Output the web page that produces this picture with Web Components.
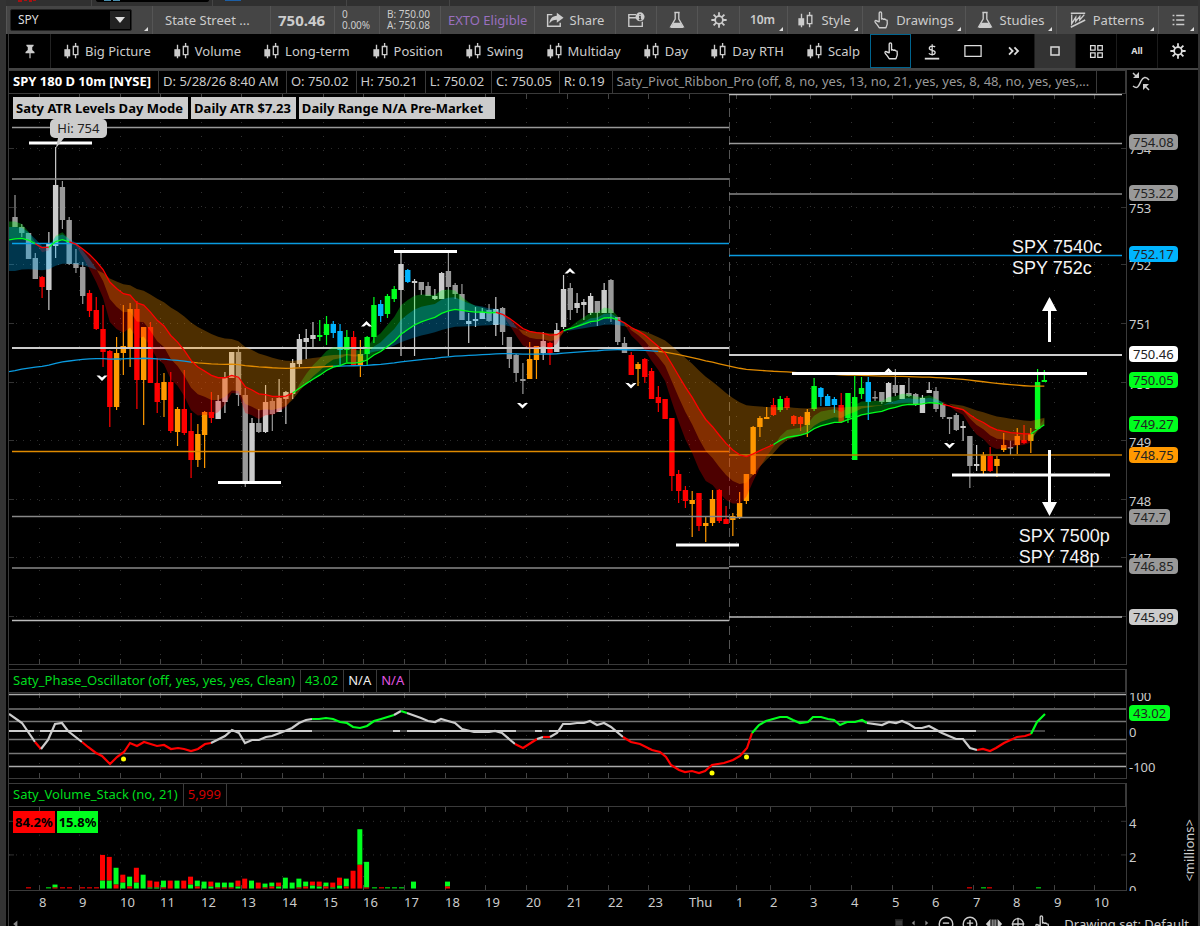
<!DOCTYPE html>
<html lang="en">
<head>
<meta charset="utf-8">
<title>SPY 180 D 10m</title>
<style>
  html, body { margin: 0; height: 100%; }
  body {
    background: #000;
    color: #ccc;
    font: 13px/18px "Noto Sans", "Open Sans", sans-serif;
    overflow: hidden;
  }
</style>
</head>
<body>
<trading-desk></trading-desk>

<script>
const ICONS = {
  candles: '<path d="M5 3v15M14 1v4M14 14v4" stroke="currentColor" stroke-width="1.5"/><path d="M1.500 8h6.500v8H1.500z" fill="currentColor"/><path d="M11.500 5h5v9h-5z" fill="none" stroke="currentColor" stroke-width="1.500"/>',
  pin: '<path d="M6 3h8v1.500l-1.500 1V9l2.500 2v1.500H5V11l2.500-2V5.500L6 4.500z" fill="currentColor"/><path d="M10 12v6" stroke="currentColor" stroke-width="1.300"/>',
  share: '<path d="M7 4H1.800v13h14v-4" fill="none" stroke="currentColor" stroke-width="1.600"/><path d="M12 2l7.500 5.500L12 13v-3.300C8.500 9.700 6 10.500 3.800 14 4 9 7 5.300 12 5.200z" fill="currentColor"/>',
  info: '<path d="M10 4H2v13h15v-5M2 7.500h8" fill="none" stroke="currentColor" stroke-width="1.500"/><circle cx="14.500" cy="6.500" r="5" fill="currentColor"/><path d="M14.500 3.300v1.500M13.400 6.200h1.300v3.200M13.200 9.500h2.800" stroke="#444" stroke-width="1.300"/>',
  flask: '<path d="M7 1.700h6M8 2v7L3 17.500h14L12 9V2" fill="none" stroke="currentColor" stroke-width="1.500"/><path d="M6 13h8l3 6H3z" fill="currentColor"/>',
  gear: '<circle cx="10" cy="10" r="4.300" fill="none" stroke="currentColor" stroke-width="2"/><path d="M10 1.500v4M10 14.500v4M1.500 10h4M14.500 10h4M4 4l2.800 2.800M13.200 13.200L16 16M16 4l-2.800 2.800M6.800 13.200L4 16" stroke="currentColor" stroke-width="2"/>',
  hand: '<path d="M8 12V2.200a1.300 1.300 0 0 1 2.600 0V9l1-.6 1.400.9 1.300-.4 1.200 1 1.300.2c.8 3 .3 5-1.300 8.500H8C6.500 16 5 14.500 3.500 12.300c-.8-1.500.8-2.400 2-1.200z" fill="none" stroke="currentColor" stroke-width="1.500" stroke-linejoin="round"/>',
  pattern: '<path d="M2 2.500h16M2 18L18 10" stroke="currentColor" stroke-width="1.700"/><path d="M3 4v10l4.500-7v4.500L12 6v4l5-6" fill="none" stroke="currentColor" stroke-width="1.500"/>',
  list: '<path d="M4 5h2M4 10h2M4 15h2M8 5h9M8 10h9M8 15h9" stroke="currentColor" stroke-width="1.500"/>',
  price: '<path d="M13.500 5.500C12 4 7 4 7 7c0 3.200 6.500 1.500 6.500 4.700 0 3-5.500 2.800-7 1M10.200 2.500v12.500" fill="none" stroke="currentColor" stroke-width="1.400"/><path d="M2 18.500h16" stroke="currentColor" stroke-width="2"/>',
  box: '<path d="M1 4h18v12H1z" fill="none" stroke="currentColor" stroke-width="1.400"/>',
  more: '<path d="M4.500 6l4 4-4 4M10.500 6l4 4-4 4" fill="none" stroke="currentColor" stroke-width="2"/>',
  single: '<path d="M5.500 5.500h9v9h-9z" fill="none" stroke="currentColor" stroke-width="1.600"/>',
  grid: '<path d="M4 4h5v5H4zM12 4h5v5h-5zM4 12h5v5H4zM12 12h5v5h-5z" fill="none" stroke="currentColor" stroke-width="1.400"/>',
  swap: '<path d="M2 15c5 4 6-1 8-5s5-5 8-1" fill="none" stroke="currentColor" stroke-width="1.500"/><path d="M8 1v6H2zM12 19v-6h6z" fill="currentColor"/><path d="M2 2l4 4M18 19l-4-4" stroke="currentColor" stroke-width="1.500"/>',
  minus: '<circle cx="10" cy="10" r="7.500" fill="none" stroke="currentColor" stroke-width="1.600"/><path d="M6.500 9h7" stroke="currentColor" stroke-width="1.600"/>',
  plus: '<circle cx="10" cy="10" r="7.500" fill="none" stroke="currentColor" stroke-width="1.600"/><path d="M6.500 9h7M10 5.500v7" stroke="currentColor" stroke-width="1.600"/>',
  expand: '<path d="M6 4.500v11L1 10zM14 4.500v11l5-5.500z" fill="currentColor"/><path d="M8 5v10M10 5v10M12 5v10" stroke="currentColor"/>',
  target: '<circle cx="10" cy="10" r="6" fill="none" stroke="currentColor" stroke-width="1.400"/><path d="M10 3v14M3 10h14" stroke="currentColor" stroke-width="1.400"/>',
  bars: '<path d="M0 0h20v20H0z" fill="#222"/><path d="M5 4v12M10 4v12M15 4v12" stroke="#666" stroke-width="2"/>',
  prev: '<path d="M14 4v12l-7-6z" fill="#888"/>',
  next: '<path d="M6 4v12l7-6z" fill="#888"/>'
};

// [class, high, body top, body bottom, low], in chart units; one entry per 10m bar
const BARS = `g 195 217 227 227,g 224 227 233 237,g 233 233 259 259,g 253 258 279 279,r 276 277 287 298,
l 232 243 290 310,l 147 185 246 258,g 181 187 220 229,g 217 220 264 265,g 249 263 268 273,
g 262 267 296 304,r 290 293 311 317,r 297 310 329 330,r 305 329 352 367,r 350 351 407 427,
o 337 353 407 410,o 305 346 353 375,o 303 309 348 367,r 301 309 380 409,o 327 327 380 425,
r 322 327 383 383,r 358 383 402 413,o 373 382 400 417,r 372 382 431 433,o 407 409 432 446,
r 370 409 433 435,r 413 431 460 478,o 424 434 460 467,o 411 412 435 468,r 392 412 418 423,
l 395 401 419 419,l 372 378 402 413,l 352 352 378 378,g 346 352 395 406,g 388 395 482 487,
l 418 423 482 482,g 409 423 432 433,l 385 402 432 433,g 398 401 414 431,l 379 398 412 412,
l 391 392 399 424,l 359 363 394 399,l 334 339 364 367,l 329 338 342 359,l 322 335 339 347,
G 320 335 337 341,G 316 324 335 345,b 321 324 333 338,b 324 331 350 365,G 330 337 350 362,
r 331 337 365 365,o 340 354 365 377,G 336 337 354 365,G 297 305 337 343,b 300 304 316 322,
G 294 296 314 318,G 286 289 299 302,l 253 264 290 356,b 269 270 282 283,l 279 281 283 356,
g 282 282 290 295,g 282 286 296 296,l 289 296 299 300,l 272 273 299 299,g 253 271 287 356,
g 283 285 294 299,g 284 294 320 320,l 313 321 324 343,l 307 319 321 327,l 308 312 319 319,
g 304 310 321 322,l 297 309 325 336,g 307 308 332 345,g 337 337 359 368,g 354 355 373 382,
g 363 379 381 394,o 342 359 379 379,o 346 346 360 379,l 332 341 353 360,r 342 343 353 365,
l 323 330 352 352,l 275 289 327 329,g 283 288 310 320,l 293 303 308 313,l 299 302 305 320,
l 293 296 313 315,g 301 301 313 326,l 283 290 313 313,g 279 280 313 322,g 317 317 342 345,
g 337 343 353 353,r 352 355 375 375,o 362 364 369 386,r 358 359 377 383,r 368 371 399 399,
r 386 397 403 412,r 399 399 419 419,r 418 418 476 491,r 470 474 491 503,r 486 490 501 508,
o 491 500 504 537,r 493 493 526 531,o 516 523 526 542,o 490 499 523 526,r 489 490 521 523,
r 506 519 524 524,o 513 516 520 536,o 492 503 518 519,o 474 474 501 504,o 426 427 474 475,
o 416 418 427 437,o 407 417 419 419,r 398 405 415 416,G 396 399 410 412,r 396 398 408 410,
r 415 416 424 426,r 416 417 424 431,o 409 412 425 437,G 378 386 409 411,b 387 388 397 406,
b 394 396 406 406,b 397 399 405 413,r 393 405 422 423,G 393 393 418 423,G 376 397 460 460,
G 377 388 394 399,b 377 382 402 420,g 391 397 398 401,g 392 392 402 404,l 382 383 402 402,
g 369 385 393 396,l 385 385 399 399,g 378 393 396 397,g 393 394 405 406,l 395 398 413 413,
l 382 390 393 393,g 387 391 409 412,g 403 404 417 419,g 417 417 419 434,g 413 415 430 431,
l 421 426 428 441,g 436 436 466 488,l 445 464 466 471,o 452 455 471 474,r 447 456 471 472,
o 456 459 466 477,o 433 445 450 452,g 441 447 448 455,o 428 436 445 454,r 425 440 443 444,
o 428 434 441 453,G 369 382 429 429,G 370 380 382 382`.split(',').map(row => {
  const [kind, ...v] = row.trim().split(' ');
  return [kind, ...v.map(Number)];
});
const BAR_COLORS = { g: '#999', l: '#ccc', r: '#f00', o: '#ff9900', G: '#00ff1e', b: '#00b4ff' };
const barX = i => 15 + i * 6.772;

const HOURS = [39, 79, 120, 160, 201, 241, 282, 323, 363, 404, 445, 485, 526, 567, 608, 648, 689, 736, 770, 810, 851, 892, 932, 973, 1013, 1054, 1094];
const HOUR_LABELS = ['8', '9', '10', '11', '12', '13', '14', '15', '16', '17', '18', '19', '20', '21', '22', '23', 'Thu', '1', '2', '3', '4', '5', '6', '7', '8', '9', '10'];

const hline = (x1, x2, y, color, w = 1) =>
  `<path d="M${x1} ${y}H${x2}" stroke="${color}" stroke-width="${w}" fill="none"/>`;

function timeGrid(top, bottom) {
  return HOURS.map(x =>
    `<path d="M${x}.5 ${top + 14}V${bottom}" stroke="#333" stroke-dasharray="1 13"/>
     <path d="M${x}.5 ${top}v5M${x}.5 ${bottom - 5}v5" stroke="#444"/>`).join('');
}

class BaseElement extends HTMLElement {
  connectedCallback() {
    this.attachShadow({ mode: 'open' });
    this.shadowRoot.innerHTML = this.template();
  }
}

class ChartIcon extends BaseElement {
  template() {
    return `
      <style>
        :host { display: block; width: 18px; height: 18px; flex: none; }
        svg { display: block; width: 100%; height: 100%; }
      </style>
      <svg viewBox="0 0 20 20" aria-hidden="true">${ICONS[this.getAttribute('name')]}</svg>`;
  }
}
customElements.define('chart-icon', ChartIcon);

class ToolButton extends BaseElement {
  template() {
    const icon = this.getAttribute('icon');
    return `
      <style>
        :host { display: block; }
        button {
          position: relative;
          display: flex;
          align-items: center;
          justify-content: center;
          gap: 6px;
          box-sizing: border-box;
          width: 100%;
          height: 100%;
          margin: 0;
          padding: 0 4px;
          border: 0;
          background: none;
          color: inherit;
          font: inherit;
          white-space: nowrap;
        }
        /* an icon on its own has to stay centred, so no gap is kept for the empty label */
        :host([label]) button { gap: 0; }
        :host([corner]) button::after {
          content: "";
          position: absolute;
          right: 4px;
          bottom: 3px;
          border: 2px solid;
          border-color: transparent #ddd #ddd transparent;
        }
        :host([corner]) button { padding-right: 6px; }
        :host([preset]) button { gap: 4px; padding: 0 10px; }
        :host([active]) button { border: 1px solid #00648f; }
        :host([selected]) button { background: #333; }
        button:hover { color: #fff; }
      </style>
      <button type="button" aria-label="${this.getAttribute('label') || this.textContent}">
        ${icon ? `<chart-icon name="${icon}"></chart-icon>` : ''}<slot></slot>
      </button>`;
  }
}
customElements.define('tool-button', ToolButton);

class TabStrip extends BaseElement {
  template() {
    return `
      <style>
        :host { display: block; height: 6px; background: #303030; }
        svg { display: block; }
      </style>
      <svg width="460" height="6" aria-hidden="true">
        <path d="M12 0h4v2h-4zM18 0h3v1h-3zM23 0h3v2h-3zM27 0h3v1h-3z" fill="#a11"/>
        <path d="M85.500 0v6M206.500 0v6M340.500 0v6M443.500 0v6" stroke="#454545"/>
        <path d="M90 0h113q0 2-3 2H93q-3 0-3-2z" fill="#000"/>
        <path d="M98 0h7v1h-7zM107 0h7v1h-7z" fill="#4a8fae"/>
        <path d="M219 0h16v1h-16z" fill="#1d5fa5"/>
      </svg>`;
  }
}
customElements.define('tab-strip', TabStrip);

class SymbolBar extends BaseElement {
  template() {
    return `
      <style>
        :host {
          display: grid;
          grid-template-columns: 146fr 118fr 64fr 45fr 61fr 94fr 81fr 41fr 41fr 42fr 48fr 75fr 103fr 91fr 102fr 40fr;
          height: 28px;
          background: #454545;
        }
        :host > * { border-left: 1px solid #555; min-width: 0; }
        :host > :first-child { border: 0; }
        .cell { display: flex; align-items: center; padding-left: 7px; white-space: nowrap; }
        .symbol { position: relative; padding-left: 3px; }
        .symbol::after {
          content: "";
          position: absolute;
          right: 4px;
          bottom: 3px;
          border: 2px solid;
          border-color: transparent #ddd #ddd transparent;
        }
        select {
          appearance: none;
          width: 122px;
          height: 22px;
          padding: 0 28px 0 7px;
          border: 1px solid #222;
          border-radius: 2px;
          background: #000;
          color: #ddd;
          font: inherit;
          font-size: 12px;
        }
        .arrow {
          position: absolute;
          left: 103px;
          width: 20px;
          height: 18px;
          background: #222;
          display: grid;
          place-items: center;
          pointer-events: none;
        }
        .name { padding-left: 12px; }
        .last { font-size: 15px; font-weight: bold; }
        .small { font-size: 10px; line-height: 11px; }
        .exto { color: #9a70c0; }
        .range { font-weight: 600; font-size: 12px; }
      </style>
      <div class="cell symbol">
        <select aria-label="Symbol"><option>SPY</option></select>
        <span class="arrow"><svg width="10" height="6" aria-hidden="true"><path d="M0 0h10L5 6z" fill="#ddd"/></svg></span>
      </div>
      <div class="cell name">State Street ...</div>
      <div class="cell last">750.46</div>
      <div class="cell small"><div>0<br>0.00%</div></div>
      <div class="cell small"><div>B: 750.00<br>A: 750.08</div></div>
      <div class="cell exto">EXTO Eligible</div>
      <tool-button icon="share">Share</tool-button>
      <tool-button icon="info" label="Info"></tool-button>
      <tool-button icon="flask" label="Edit studies"></tool-button>
      <tool-button icon="gear" label="Settings"></tool-button>
      <tool-button class="range" corner>10m</tool-button>
      <tool-button icon="candles" corner>Style</tool-button>
      <tool-button icon="hand" corner>Drawings</tool-button>
      <tool-button icon="flask" corner>Studies</tool-button>
      <tool-button icon="pattern" corner>Patterns</tool-button>
      <tool-button icon="list" label="Menu" corner></tool-button>`;
  }
}
customElements.define('symbol-bar', SymbolBar);

class PresetBar extends BaseElement {
  template() {
    const presets = ['Big Picture', 'Volume', 'Long-term', 'Position', 'Swing', 'Multiday', 'Day', 'Day RTH', 'Scalp'];
    return `
      <style>
        :host { display: flex; height: 34px; background: #000; border-bottom: 2px solid #444; }
        .pin { flex: none; width: 41px; border-right: 1px solid #222; }
        .presets { display: flex; flex: 1; justify-content: space-between; padding-left: 2px; }
        .tools { display: grid; grid-template-columns: repeat(8, 41px); color: #ddd; }
        .tools > :nth-child(n+5) { border-left: 1px solid #1c1c1c; }
        .all { font-size: 9px; font-weight: bold; }
      </style>
      <tool-button class="pin" icon="pin" label="Pin"></tool-button>
      <div class="presets">
        ${presets.map(p => `<tool-button preset icon="candles">${p}</tool-button>`).join('')}
      </div>
      <div class="tools">
        <tool-button icon="hand" label="Pointer" active></tool-button>
        <tool-button icon="price" label="Price level"></tool-button>
        <tool-button icon="box" label="Rectangle"></tool-button>
        <tool-button icon="more" label="More"></tool-button>
        <tool-button icon="single" label="Single chart" selected></tool-button>
        <tool-button icon="grid" label="Grid"></tool-button>
        <tool-button class="all">All</tool-button>
        <tool-button icon="gear" label="Settings"></tool-button>
      </div>`;
  }
}
customElements.define('preset-bar', PresetBar);

class StudyHeader extends BaseElement {
  template() {
    return `
      <style>
        :host {
          display: flex;
          height: 22px;
          border: 1px solid #3a3a3a;
          border-left: 0;
          line-height: 21px;
          white-space: nowrap;
        }
        ::slotted(span) { padding: 0 5px 0 4px; border-right: 1px solid #3a3a3a; }
        :host([roomy]) ::slotted(span) { padding-right: 7px; }
      </style>
      <slot></slot>`;
  }
}
customElements.define('study-header', StudyHeader);

class PriceChart extends BaseElement {
  // y values are screen units, so the averages come out in the same units
  ema(length, seed) {
    const k = 2 / (length + 1);
    let prev = seed;
    return BARS.map(([kind, , top, bottom]) => {
      const close = 'loG'.includes(kind) ? top : bottom;
      prev += (close - prev) * k;
      return prev;
    });
  }

  // splits the bars in runs where a stays on the same side of b
  runs(a, b) {
    const out = [];
    let start = 0;
    for (let i = 1; i <= a.length; i++) {
      if (i === a.length || (a[i] < b[i]) !== (a[start] < b[start])) {
        out.push({ from: Math.max(0, start - 1), to: i - 1, up: a[start] < b[start] });
        start = i;
      }
    }
    return out;
  }

  cloud(a, b, up, down) {
    return this.runs(a, b).map(r => {
      const idx = [];
      for (let i = r.from; i <= r.to; i++) idx.push(i);
      const pts = idx.map(i => `${barX(i)},${a[i]}`)
        .concat(idx.reverse().map(i => `${barX(i)},${b[i]}`));
      if (r.from === 0) pts.push(`9,${b[0]}`, `9,${a[0]}`);
      return `<polygon points="${pts.join(' ')}" fill="${r.up ? up : down}" fill-opacity=".3"/>`;
    }).join('');
  }

  line(values, a, b, up, down) {
    return this.runs(a, b).map(r => {
      const pts = r.from === 0 ? [`9,${values[0] + 1}`] : [];
      for (let i = r.from; i <= r.to; i++) pts.push(`${barX(i)},${values[i]}`);
      return `<polyline points="${pts.join(' ')}" fill="none" stroke="${r.up ? up : down}" stroke-width="1.300"/>`;
    }).join('');
  }

  template() {
    const e8 = this.ema(8, 220);
    const e13 = this.ema(13, 227);
    const e21 = this.ema(21, 240);
    const e48 = this.ema(48, 273);
    const e200 = this.ema(200, 372);

    const candles = BARS.map(([kind, high, top, bottom, low], i) => {
      const x = barX(i);
      return `<path d="M${x} ${high}V${low}" stroke="${BAR_COLORS[kind]}" stroke-width="1.200"/>
        <rect x="${x - 2.7}" y="${top}" width="5.400" height="${Math.max(1.5, bottom - top)}" fill="${BAR_COLORS[kind]}"/>`;
    }).join('');

    const left = [[127.5, '#999'], [179, '#888'], [243.5, '#0a9be0'], [348, '#ccc', 2], [451.5, '#e08a00'], [516.5, '#888'], [568, '#888'], [620.5, '#bbb']];
    const right = [[94.5, '#bbb', 1.5], [143.5, '#999'], [194, '#888'], [255.5, '#0a9be0'], [355, '#ccc', 2], [455, '#c07800', 1.5], [517.5, '#888'], [566.5, '#999'], [617, '#bbb', 1.3]];
    const marks = [[29, 92, 143], [394, 457, 251.5], [218, 281, 482.5], [676, 739, 545], [792, 1087, 373.5], [952, 1110, 475]];
    const down = [[102, 378], [522.5, 405.5], [631, 385.5], [949.5, 445.5]];
    const up = [[366.5, 324], [570, 271], [888.5, 371]];

    return `
      <style>
        :host { position: relative; display: block; flex: 1; min-height: 200px; }
        svg { position: absolute; width: 100%; height: 100%; }
        .badges { position: relative; display: flex; gap: 3px; padding: 3px 0 0 4px; }
        .badges span {
          padding: 0 5px 0 3px;
          background: #ccc;
          color: #000;
          font-weight: bold;
          line-height: 22px;
          white-space: pre;
        }
        .hi {
          position: absolute;
          left: 3.700%;
          top: 4.400%;
          padding: 0 7px;
          border-radius: 5px;
          background: #ccc;
          color: #222;
          line-height: 19px;
        }
        .note {
          position: absolute;
          color: #f4f4f4;
          font: 18px/21px "Liberation Sans", Arial, sans-serif;
          white-space: nowrap;
        }
        .calls { left: 89.8%; top: 25%; }
        .puts { left: 90.4%; top: 75.800%; }
      </style>
      <svg viewBox="9 94 1117 570" preserveAspectRatio="none" role="img" aria-label="SPY price chart">
        ${timeGrid(94, 664)}
        ${[148, 207, 264, 323, 382, 440, 499, 557, 616].map(y => `<path d="M9 ${y}.5H1112" stroke="#2c2c2c" stroke-dasharray="1 6"/><path d="M9 ${y}.5h5M1121 ${y}.5h5" stroke="#333"/>`).join('')}
        <path d="M729.500 94V664" stroke="#555" stroke-dasharray="9 5"/>
        ${candles}
        ${left.map(([y, c, w]) => hline(12, 729, y, c, w || 1.3)).join('')}
        ${right.map(([y, c, w]) => hline(729, 1122, y, c, w || 1.3)).join('')}
        ${this.cloud(e8, e21, '#00ff1e', '#f00')}
        ${this.cloud(e13, e48, '#00b4ff', '#ff9900')}
        ${this.line(e200, e21, e200, '#0a9be0', '#e08a00')}
        ${this.line(e21, e8, e21, '#00ff1e', '#f00')}
        ${marks.map(([a, b, y]) => hline(a, b, y, '#fff', 3)).join('')}
        ${down.map(([x, y]) => `<path d="M${x - 5.500} ${y - 2.5}h3l2.500 2 2.500-2h3l-5.500 5.500z" fill="#fff"/>`).join('')}
        ${up.map(([x, y]) => `<path d="M${x - 5.500} ${y + 2.5}h3l2.500-2 2.500 2h3l-5.500-5.500z" fill="#fff"/>`).join('')}
        <path d="M1049.500 342V308M1049.500 450V506" stroke="#fff" stroke-width="3"/>
        <path d="M1042 311h15l-7.500-14zM1042 502h15l-7.500 14z" fill="#fff"/>
        <path d="M58 138h6l-8 10z" fill="#ccc"/>
      </svg>
      <div class="badges"><span>Saty ATR Levels Day Mode</span><span>Daily ATR $7.23</span><span>Daily Range N/A Pre-Market  </span></div>
      <div class="hi">Hi: 754</div>
      <div class="note calls">SPX 7540c<br>SPY 752c</div>
      <div class="note puts">SPX 7500p<br>SPY 748p</div>`;
  }
}
customElements.define('price-chart', PriceChart);

class PhaseChart extends BaseElement {
  template() {
    const colors = { w: '#ccc', r: '#f00', g: '#00ff1e' };
    const line = `w 9,714 22,723 35,742|r 35,742 41,749|w 41,749 48,740 55,724 62,723 68,731 82,742
|r 82,742 88,747 96,753 102,756 110,764 117,757 124,752 130,743 137,746 144,742 157,746 164,745 171,749 178,748 184,749 191,751 198,749 205,744 211,743
|w 211,743 225,736 232,730 239,733 245,743 252,740 259,740 266,737 272,736 285,731 292,728 299,723 306,720 312,719
|g 312,719 319,719 326,718 333,719 340,722 347,723 353,727 360,728 367,726 374,721 381,719 394,715|w 394,715 401,711|g 401,711 407,713
|w 407,713 421,718 428,721 435,722 441,719 448,721 455,723 462,729 474,732 489,732 495,731 502,733 515,744
|r 515,744 523,748 537,739|w 537,739 543,737|r 543,737 550,737
|w 550,737 557,733 563,724 570,724 577,723 584,723 590,721 597,725 604,723 611,727 623,737
|r 623,737 631,742 640,744 652,750 660,752 666,757 671,765 679,770 685,772 692,771 699,773 705,771 712,765 724,763 733,760 740,756 747,748 752,733
|g 752,733 759,725 766,721 780,717 787,717 793,720 800,723 808,722 813,717 821,717 828,719 834,720 840,725 847,722 855,722 862,720 867,723
|w 867,723 882,725 889,722 896,723 902,721 909,724 915,728 922,728 929,726 942,733 949,736 956,739 963,739 970,748 977,750
|r 977,750 983,749 990,751 996,748 1004,743 1017,737 1025,736 1031,734|g 1031,734 1037,722 1045,714`
      .split('|').map(s => `<polyline points="${s.trim().slice(2)}" fill="none" stroke="${colors[s.trim()[0]]}" stroke-width="2.200"/>`).join('');
    const zero = [[9, 34], [40, 82], [210, 312], [393, 400], [407, 516], [535, 542], [549, 623], [867, 976]];
    return `
      <style>
        :host { display: block; height: 85px; }
        svg { display: block; width: 100%; height: 100%; }
      </style>
      <svg viewBox="9 693 1117 85" preserveAspectRatio="none" role="img" aria-label="Phase oscillator">
        ${timeGrid(693, 778)}
        ${[694.5, 709, 721.5, 739.5, 753.5, 766.5].map((y, i) => hline(9, 1126, y, i % 5 ? '#777' : '#aaa', 1.5)).join('')}
        ${hline(9, 1045, 731, '#444', 2)}
        ${zero.map(([a, b]) => hline(a, b, 731, '#ccc', 2)).join('')}
        ${line}
        ${[[123.5, 759], [712, 773], [746.5, 757]].map(([x, y]) => `<circle cx="${x}" cy="${y}" r="2.500" fill="#ff0"/>`).join('')}
      </svg>`;
  }
}
customElements.define('phase-chart', PhaseChart);

class VolumeChart extends BaseElement {
  template() {
    // total height, colour of the upper part, height of the lower part
    const stack = `34r8 32r8 21g4 14r6 12g2 21r6 14g0 8r1 7r1 8g1 8r0 8g0 8r0 12r4 8g2 7g0 7r2 6g1 6g1 6g1 8r2 10r0 8g0 6r0 5g1 6g2 6r2 11g0 6g0 10g1 7g2 7r3 7r2 6g2 6r1 11r3 10g2 18r0 60g24 27g1`;
    const color = { r: '#f00', g: '#00ff1e' };
    const other = { r: 'g', g: 'r' };
    const bar = (x, total, c, low) =>
      `<rect x="${x - 2.5}" y="${889.5 - total}" width="5" height="${total - low}" fill="${color[c]}"/>` +
      (low ? `<rect x="${x - 2.5}" y="${889.5 - low}" width="5" height="${low}" fill="${color[other[c]]}"/>` : '');
    const bars = stack.split(' ').map((s, i) => {
      const [, total, c, low] = s.match(/(\d+)([rg])(\d+)/);
      return bar(102.5 + i * 6.772, +total, c, +low);
    }).join('');
    const thin = 'r28 g48 r62 r69 r82 r89 r96 g374 r381 g387 g394 g401 r969 g983 r989 g1038'.split(' ')
      .map(s => `<rect x="${+s.slice(1) - 2}" y="888" width="5" height="1.500" fill="${s[0] === 'r' ? '#b00' : '#0a1'}"/>`).join('');
    return `
      <style>
        :host { position: relative; display: block; box-sizing: border-box; height: 84px; border-bottom: 1px solid #3a3a3a; }
        svg { position: absolute; width: 100%; height: 100%; }
        .badges { position: relative; display: flex; gap: 2px; padding: 4px 0 0 4px; }
        .badges span { padding: 0 2px; color: #000; font-weight: bold; line-height: 22px; }
        .sell { background: #f00; }
        .buy { background: #00ff1e; }
      </style>
      <svg viewBox="9 807 1117 84" preserveAspectRatio="none" role="img" aria-label="Volume">
        ${timeGrid(807, 891)}
        ${[821, 855].map(y => `<path d="M9 ${y}.5H1112" stroke="#333" stroke-dasharray="1 6"/><path d="M9 ${y}.5h5M1121 ${y}.5h5" stroke="#333"/>`).join('')}
        ${thin}${bars}${bar(55, 4, 'g', 1)}${bar(413.5, 7, 'g', 0)}${bar(447.5, 7, 'g', 2)}
      </svg>
      <div class="badges"><span class="sell">84.2%</span><span class="buy">15.8%</span></div>`;
  }
}
customElements.define('volume-chart', VolumeChart);

class ValueScale extends BaseElement {
  template() {
    const from = +this.getAttribute('from');
    const span = +this.getAttribute('span');
    const at = y => `top:${(y - from) / span * 100}%`;
    const items = s => (s || '').split(';').filter(Boolean).map(t => t.trim().split(' '));
    return `
      <style>
        :host { position: relative; display: block; overflow: hidden; border-left: 1px solid #3a3a3a; }
        span { position: absolute; left: 2px; line-height: 16px; transform: translateY(-50%); }
        .tag { padding: 0 4px; border-radius: 4px; color: #222; }
      </style>
      ${items(this.getAttribute('ticks')).map(([v, y]) => `<span style="${at(y)}">${v}</span>`).join('')}
      ${items(this.getAttribute('tags')).map(([v, y, c]) => `<span class="tag" style="${at(y)};background:${c}">${v}</span>`).join('')}
      <slot></slot>`;
  }
}
customElements.define('value-scale', ValueScale);

class TimeAxis extends BaseElement {
  template() {
    const cols = HOURS.map((x, i) => `minmax(0, ${(HOURS[i + 1] || 1126) - x}fr)`).join(' ');
    return `
      <style>
        :host { display: grid; grid-template-columns: minmax(0, 30fr) ${cols}; line-height: 23px; height: 24px; }
        span { white-space: nowrap; }
      </style>
      <span></span>${HOUR_LABELS.map(t => `<span>${t}</span>`).join('')}`;
  }
}
customElements.define('time-axis', TimeAxis);

class StatusBar extends BaseElement {
  template() {
    return `
      <style>
        :host { display: flex; height: 11px; align-items: flex-start; justify-content: flex-end; gap: 6px; padding-right: 9px; overflow: hidden; }
        .scroll { margin-right: auto; width: 12px; }
        .small { width: 8px; height: 16px; }
        .set { padding-left: 7px; white-space: nowrap; }
      </style>
      <chart-icon class="scroll" name="prev"></chart-icon>
      <chart-icon class="small" name="bars"></chart-icon>
      <chart-icon class="small" name="prev"></chart-icon>
      <chart-icon class="small" name="next"></chart-icon>
      <chart-icon name="minus"></chart-icon>
      <chart-icon name="plus"></chart-icon>
      <chart-icon name="expand"></chart-icon>
      <chart-icon name="target"></chart-icon>
      <chart-icon name="hand"></chart-icon>
      <span class="set">Drawing set: Default</span>`;
  }
}
customElements.define('status-bar', StatusBar);

class TradingDesk extends BaseElement {
  template() {
    return `
      <style>
        :host { display: flex; height: 100vh; background: #333; }
        .frame { flex: 1; min-width: 0; margin: 0 2px 0 6px; display: flex; flex-direction: column; background: #000; }
        .body { flex: 1; min-height: 0; display: flex; flex-direction: column; margin-left: 2px; border-left: 1px solid #3a3a3a; }
        .panel { display: grid; grid-template-columns: minmax(0, 1fr) 72px; }
        .panel + .panel { margin-top: 4px; }
        .price { flex: 1; min-height: 0; }
        .plot { display: flex; flex-direction: column; min-width: 0; }
        .price .plot, .phase .plot { border-bottom: 1px solid #3a3a3a; }
        .side { display: flex; flex-direction: column; }
        .side > div { height: 24px; flex: none; box-sizing: border-box; border-left: 1px solid #3a3a3a; }
        .side value-scale { flex: 1; }
        .swap { padding: 1px 0 0 4px; }
        .swap chart-icon { width: 20px; height: 20px; }
        .title { color: #fff; font-weight: bold; }
        .ribbon { color: #999; }
        .green { color: #00dc1e; }
        .white { color: #eee; }
        .pink { color: #e055e0; }
        .red { color: #d00000; }
        .millions {
          position: absolute;
          right: 0;
          bottom: 9px;
          writing-mode: vertical-rl;
          transform: rotate(180deg);
        }
        time-axis { margin-right: 72px; }
      </style>
      <div class="frame">
        <tab-strip></tab-strip>
        <symbol-bar></symbol-bar>
        <div class="body">
          <preset-bar></preset-bar>
          <section class="panel price">
            <div class="plot">
              <study-header roomy>
                <span class="title">SPY 180 D 10m [NYSE]</span><span>D: 5/28/26 8:40 AM</span><span>O: 750.02</span><span>H: 750.21</span><span>L: 750.02</span><span>C: 750.05</span><span>R: 0.19</span><span class="ribbon">Saty_Pivot_Ribbon_Pro (off, 8, no, yes, 13, no, 21, yes, yes, 8, 48, no, yes, yes,...</span>
              </study-header>
              <price-chart></price-chart>
            </div>
            <div class="side">
              <div class="swap"><chart-icon name="swap"></chart-icon></div>
              <value-scale from="94" span="570"
                ticks="754 149;753 208;752 265;751 324;750 383;749 441;748 500;747 557"
                tags="754.08 142 #999;753.22 193 #999;752.17 254 #00b4ff;750.46 354 #fff;750.05 379 #00ff1e;749.27 423 #00ff1e;748.75 454 #ff9900;747.7 516 #999;746.85 565 #999;745.99 616 #ccc"></value-scale>
            </div>
          </section>
          <section class="panel phase">
            <div class="plot">
              <study-header>
                <span class="green">Saty_Phase_Oscillator (off, yes, yes, yes, Clean)</span><span class="green">43.02</span><span class="white">N/A</span><span class="pink">N/A</span>
              </study-header>
              <phase-chart></phase-chart>
            </div>
            <div class="side">
              <div></div>
              <value-scale from="693" span="86" ticks="100 696;0 732;-100 767" tags="43.02 713 #00ff1e"></value-scale>
            </div>
          </section>
          <section class="panel volume">
            <div class="plot">
              <study-header>
                <span class="green">Saty_Volume_Stack (no, 21)</span><span class="red">5,999</span>
              </study-header>
              <volume-chart></volume-chart>
            </div>
            <div class="side">
              <div></div>
              <value-scale from="807" span="84" ticks="4 823;2 857;0 890"><div class="millions">&lt;millions&gt;</div></value-scale>
            </div>
          </section>
          <time-axis></time-axis>
          <status-bar></status-bar>
        </div>
      </div>`;
  }
}
customElements.define('trading-desk', TradingDesk);
</script>
</body>
</html>
